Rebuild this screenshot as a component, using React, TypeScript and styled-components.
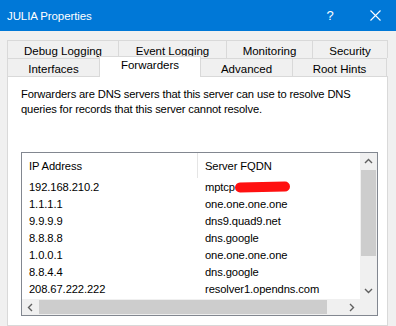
import React from 'react';
import styled, { createGlobalStyle } from 'styled-components';

const GlobalStyle = createGlobalStyle`
  html, body {
    margin: 0;
    padding: 0;
    background: #f0f0f0;
  }
  body {
    font-family: "Liberation Sans", Arial, sans-serif;
    font-size: 12px;
    color: #000;
  }
`;

const Window = styled.div`
  width: 396px;
  height: 326px;
  overflow: hidden;
  display: flex;
  flex-direction: column;
  background: #f0f0f0;
`;

const TitleBar = styled.div`
  height: 31px;
  flex: none;
  background: #0078d7;
  color: #fff;
  display: flex;
  align-items: center;
  padding-left: 7px;
`;

const Title = styled.div`
  flex: 1;
  font-size: 11.5px;
  letter-spacing: -0.1px;
`;

const TitleButton = styled.div<{ $w: number }>`
  width: ${(p) => p.$w}px;
  height: 31px;
  display: flex;
  align-items: center;
  justify-content: center;
  font-size: 13px;
`;

const Body = styled.div`
  flex: 1;
  min-height: 0;
  padding: 9px 8px 0 7px;
  display: flex;
  flex-direction: column;
`;

const TabRow = styled.div`
  display: flex;
  flex: none;
  height: 18px;
  position: relative;
`;

const Tab = styled.div<{ $w: number; $selected?: boolean; $first?: boolean }>`
  width: ${(p) => p.$w}px;
  box-sizing: border-box;
  display: flex;
  align-items: center;
  justify-content: center;
  border-top: 1px solid #d9d9d9;
  border-right: 1px solid #d9d9d9;
  border-left: ${(p) => (p.$first ? '1px solid #d9d9d9' : 'none')};
  background: ${(p) => (p.$selected ? '#fff' : '#f0f0f0')};
  font-size: 11.5px;
  padding-top: 2px;
  ${(p) =>
    p.$selected &&
    `
    margin-top: -2px;
    margin-left: -1px;
    border-left: 1px solid #d9d9d9;
    height: 21px;
    align-items: flex-start;
    padding-top: 2px;
    position: relative;
    z-index: 2;
  `}
`;

const Panel = styled.div`
  flex: 1;
  background: #fff;
  border: 1px solid #d9d9d9;
  padding: 10px 9px 0 13px;
  display: flex;
  flex-direction: column;
`;

const Description = styled.p`
  margin: 0;
  font-size: 11.2px;
  line-height: 15px;
  letter-spacing: -0.15px;
`;

const ListBox = styled.div`
  flex: none;
  margin-top: 35px;
  height: 164px;
  box-sizing: border-box;
  border: 1px solid #828790;
  display: flex;
  flex-direction: column;
`;

const ListMain = styled.div`
  height: 146px;
  flex: none;
  display: flex;
`;

const ListContent = styled.div`
  flex: 1;
  overflow: hidden;
  font-size: 11.2px;
  letter-spacing: -0.1px;
`;

const HeaderRow = styled.div`
  display: grid;
  grid-template-columns: 176px 1fr;
  height: 25px;
`;

const HeaderCell = styled.div<{ $divider?: boolean }>`
  display: flex;
  align-items: center;
  padding-left: 7px;
  border-right: ${(p) => (p.$divider ? '1px solid #e5e5e5' : 'none')};
`;

const Row = styled.div`
  display: grid;
  grid-template-columns: 176px 1fr;
  height: 17px;
  align-items: center;
`;

const Cell = styled.div`
  padding-left: 7px;
  white-space: nowrap;
  display: flex;
  align-items: center;
`;

const Redaction = styled.span`
  display: inline-block;
  width: 55px;
  height: 10px;
  background: #ff1010;
  border-radius: 6px;
  transform: rotate(-1deg);
  margin-top: 1px;
`;

const VScroll = styled.div`
  width: 17px;
  flex: none;
  background: #f0f0f0;
  display: flex;
  flex-direction: column;
  align-items: center;
`;

const ArrowButton = styled.div<{ $h?: number; $w?: number }>`
  width: ${(p) => p.$w ?? 17}px;
  height: ${(p) => p.$h ?? 17}px;
  flex: none;
  display: flex;
  align-items: center;
  justify-content: center;
`;

const Spacer = styled.div`
  flex: 1;
`;

const VThumb = styled.div`
  width: 15px;
  height: 86px;
  flex: none;
  background: #cdcdcd;
`;

const HScrollRow = styled.div`
  height: 16px;
  flex: none;
  display: flex;
  background: #f0f0f0;
`;

const HScroll = styled.div`
  flex: 1;
  display: flex;
  align-items: center;
`;

const HThumb = styled.div`
  width: 288px;
  height: 14px;
  flex: none;
  background: #cdcdcd;
`;

const Corner = styled.div`
  width: 17px;
  flex: none;
  background: #f0f0f0;
`;

const Chevron = ({ dir }: { dir: 'up' | 'down' | 'left' | 'right' }) => {
  const rot = { up: 0, right: 90, down: 180, left: 270 }[dir];
  return (
    <svg width="9" height="9" viewBox="0 0 9 9" style={{ transform: `rotate(${rot}deg)` }}>
      <path d="M1 6 L4.5 2.5 L8 6" fill="none" stroke="#606060" strokeWidth="1.4" />
    </svg>
  );
};

const forwarders: [string, string][] = [
  ['192.168.210.2', 'mptcp'],
  ['1.1.1.1', 'one.one.one.one'],
  ['9.9.9.9', 'dns9.quad9.net'],
  ['8.8.8.8', 'dns.google'],
  ['1.0.0.1', 'one.one.one.one'],
  ['8.8.4.4', 'dns.google'],
  ['208.67.222.222', 'resolver1.opendns.com'],
];

const topTabs: [string, number][] = [
  ['Debug Logging', 112],
  ['Event Logging', 108],
  ['Monitoring', 86],
  ['Security', 75],
];

const bottomTabs: [string, number][] = [
  ['Interfaces', 93],
  ['Forwarders', 102],
  ['Advanced', 92],
  ['Root Hints', 94],
];

export default function App() {
  return (
    <Window>
      <GlobalStyle />
      <TitleBar>
        <Title>JULIA Properties</Title>
        <TitleButton $w={48}>?</TitleButton>
        <TitleButton $w={42}>
          <svg width="11" height="11" viewBox="0 0 11 11">
            <path d="M0.5 0.5 L10.5 10.5 M10.5 0.5 L0.5 10.5" stroke="#fff" strokeWidth="1.1" />
          </svg>
        </TitleButton>
      </TitleBar>
      <Body>
        <TabRow>
          {topTabs.map(([label, w], i) => (
            <Tab key={label} $w={w} $first={i === 0}>
              {label}
            </Tab>
          ))}
        </TabRow>
        <TabRow>
          {bottomTabs.map(([label, w], i) => (
            <Tab key={label} $w={w} $first={i === 0} $selected={label === 'Forwarders'}>
              {label}
            </Tab>
          ))}
        </TabRow>
        <Panel>
          <Description>
            Forwarders are DNS servers that this server can use to resolve DNS queries for records that this server cannot resolve.
          </Description>
          <ListBox>
            <ListMain>
              <ListContent>
                <HeaderRow>
                  <HeaderCell $divider>IP Address</HeaderCell>
                  <HeaderCell>Server FQDN</HeaderCell>
                </HeaderRow>
                {forwarders.map(([ip, fqdn]) => (
                  <Row key={ip + fqdn}>
                    <Cell>{ip}</Cell>
                    <Cell>
                      {fqdn}
                      {fqdn === 'mptcp' && <Redaction />}
                    </Cell>
                  </Row>
                ))}
              </ListContent>
              <VScroll>
                <ArrowButton>
                  <Chevron dir="up" />
                </ArrowButton>
                <VThumb />
                <Spacer />
                <ArrowButton>
                  <Chevron dir="down" />
                </ArrowButton>
              </VScroll>
            </ListMain>
            <HScrollRow>
              <HScroll>
                <ArrowButton $h={16}>
                  <Chevron dir="left" />
                </ArrowButton>
                <HThumb />
                <Spacer />
                <ArrowButton $h={16}>
                  <Chevron dir="right" />
                </ArrowButton>
              </HScroll>
              <Corner />
            </HScrollRow>
          </ListBox>
        </Panel>
      </Body>
    </Window>
  );
}
